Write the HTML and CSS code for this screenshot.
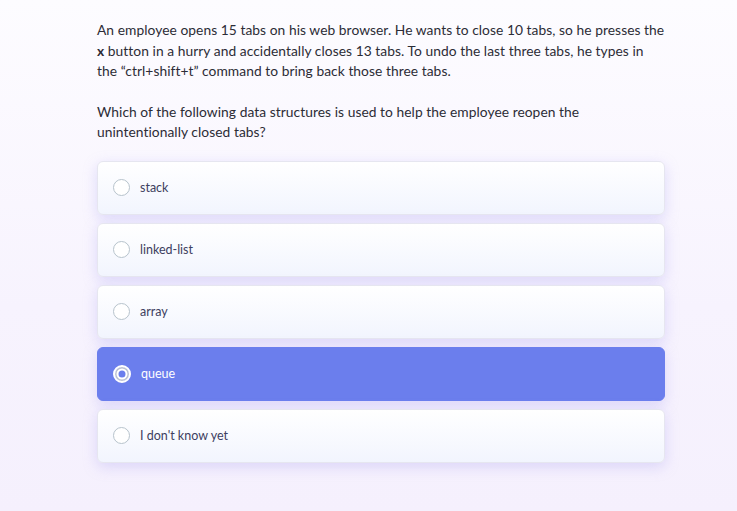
FILE: index.html
```html
<!DOCTYPE html>
<html>
<head>
<meta charset="utf-8">
<link rel="stylesheet" href="styles.css">
</head>
<body>
<main class="quiz">
  <div class="question">
    <p>An employee opens 15 tabs on his web browser. He wants to close 10 tabs, so he presses the <b>x</b> button in a hurry and accidentally closes 13 tabs. To undo the last three tabs, he types in the “ctrl+shift+t” command to bring back those three tabs.</p>
    <p>Which of the following data structures is used to help the employee reopen the unintentionally closed tabs?</p>
  </div>
  <ul class="options">
    <li class="option"><span class="radio"></span><span class="label">stack</span></li>
    <li class="option"><span class="radio"></span><span class="label">linked-list</span></li>
    <li class="option"><span class="radio"></span><span class="label">array</span></li>
    <li class="option selected"><span class="radio"></span><span class="label">queue</span></li>
    <li class="option"><span class="radio"></span><span class="label">I don't know yet</span></li>
  </ul>
</main>
</body>
</html>
```
FILE: styles.css
```css
html, body {
  margin: 0;
  height: 100%;
}
body {
  background: linear-gradient(180deg, #fdfcff 0%, #f7f3fe 60%, #f5f0fd 100%);
  font-family: Lato, "Noto Sans", sans-serif;
  color: #2c2c36;
}
.quiz {
  width: 568px;
  margin-left: 97px;
  padding-top: 20px;
}
.question p {
  margin: 0 0 20px 0;
  font-size: 13.8px;
  line-height: 20.5px;
  letter-spacing: 0.05px;
}
.question p:last-child {
  margin-bottom: 18px;
}
.options {
  list-style: none;
  margin: 0;
  padding: 0;
  display: flex;
  flex-direction: column;
  gap: 8px;
}
.option {
  height: 52px;
  display: flex;
  align-items: center;
  padding-left: 15px;
  border: 1px solid #e6e6f0;
  border-radius: 6px;
  background: linear-gradient(180deg, #ffffff 0%, #f2f5fe 100%);
  box-shadow: 0 4px 14px rgba(170, 160, 240, 0.35);
}
.radio {
  width: 15px;
  height: 15px;
  border: 1.5px solid #b7c3cc;
  border-radius: 50%;
  background: #fff;
  flex: none;
}
.label {
  margin-left: 10px;
  font-size: 12.5px;
  color: #3d4060;
}
.option.selected {
  background: #6b7eed;
  border-color: #6b7eed;
}
.option.selected .radio {
  border: 2px solid #fff;
  width: 14px;
  height: 14px;
  background: #6b7eed;
  box-shadow: inset 0 0 0 1.5px #b9bfd0, inset 0 0 0 3.5px #fff;
}
.option.selected .label {
  color: #fff;
}
```
